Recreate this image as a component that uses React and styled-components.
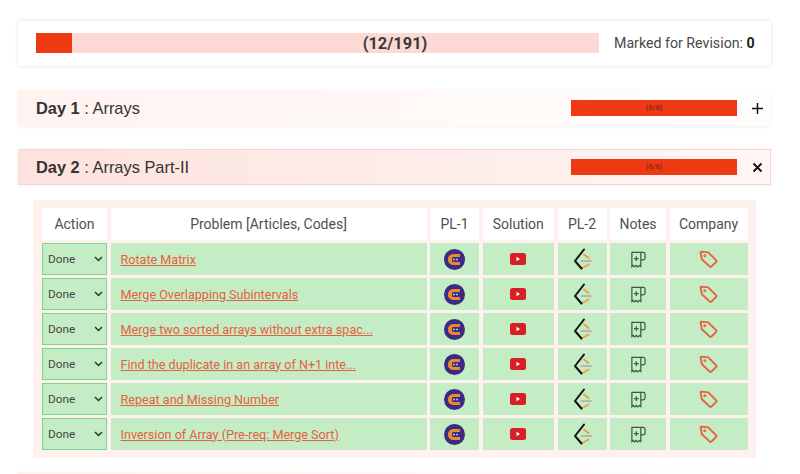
import React from "react";
import styled, { createGlobalStyle } from "styled-components";

const Global = createGlobalStyle`
  html, body { margin: 0; padding: 0; background: #fff; height: 474px; overflow: hidden; }
  body { font-family: "Roboto", "Liberation Sans", sans-serif; color: #333; }
`;
const Page = styled.div`
  width: 800px;
  padding: 21px 29px 0 18px;
  box-sizing: border-box;
`;
const TopCard = styled.div`
  height: 45px;
  box-sizing: border-box;
  display: flex;
  align-items: center;
  padding: 0 17px 1px 18px;
  background: #fff;
  box-shadow: 0 0 4px rgba(0, 0, 0, 0.12);
`;
const TopBar = styled.div`
  position: relative;
  flex: 0 0 563px;
  box-sizing: border-box;
  height: 20px;
  padding-left: 155px;
  background: #fdd9d3;
  display: flex;
  align-items: center;
  justify-content: center;
  font-size: 16.4px;
  font-weight: 700;
  color: #3a3a3a;
`;
const TopFill = styled.div`
  position: absolute;
  left: 0;
  top: 0;
  bottom: 0;
  background: #ee3912;
`;
const TopLabel = styled.span`
  position: relative;
`;
const Revision = styled.div`
  margin-left: 15px;
  font-size: 14.2px;
  color: #4a4a4a;
  white-space: nowrap;
  b { color: #222; }
`;
const Accordion = styled.div`
  height: 36px;
  margin-top: ${p => p.$gap}px;
  display: flex;
  align-items: center;
  padding: 0 0 0 18px;
  box-sizing: border-box;
  background: ${p => (p.$open
    ? "linear-gradient(90deg, #fde2de, #fff6f4)"
    : "linear-gradient(90deg, #fff3f0, #fffdfc)")};
  border: ${p => (p.$open ? "1px solid #f8d3cd" : "none")};
  border-left: none;
  box-shadow: 0 1px 4px rgba(0, 0, 0, 0.06);
  font-family: "Liberation Sans", Arial, sans-serif;
  font-size: 16.4px;
  color: #333;
`;
const Title = styled.div`
  flex: 1;
  b { font-weight: 700; }
`;
const DayBar = styled.div`
  width: 166px;
  height: 16px;
  background: #ee3912;
  color: #8d2a16;
  font-size: 7.5px;
  font-weight: 700;
  text-align: center;
  line-height: 16px;
  font-family: "Roboto", sans-serif;
`;
const Toggle = styled.div`
  width: ${p => (p.$open ? 33 : 34)}px;
  box-sizing: border-box;
  height: 100%;
  padding-right: 7px;
  display: flex;
  align-items: center;
  justify-content: flex-end;
  svg { display: block; }
`;
const TableWrap = styled.div`
  margin: 15px 15px 0 15px;
  width: 723px;
  box-sizing: border-box;
  height: 258px;
  padding: 8px 8px 0 9px;
  background: #fff1ee;
`;
const Grid = styled.div`
  display: grid;
  grid-template-columns: 65px 316px 49px 71.5px 49px 56px 78px;
  grid-auto-rows: 32px;
  column-gap: 3.5px;
  row-gap: 3px;
`;
const Head = styled.div`
  background: #fff;
  display: flex;
  align-items: center;
  justify-content: center;
  font-size: 14px;
  color: #505050;
  white-space: nowrap;
`;
const Cell = styled.div`
  background: #c5edc5;
  display: flex;
  align-items: center;
  justify-content: ${p => (p.$left ? "flex-start" : "center")};
  padding-left: ${p => (p.$left ? "10px" : "0")};
  font-size: 12.6px;
  min-width: 0;
`;
const ActionCell = styled.div`
  background: #c5edc5;
  border: 1px solid #7ad88e;
  box-sizing: border-box;
  display: flex;
  align-items: center;
  justify-content: space-between;
  padding: 0 3px 0 5px;
  font-size: 11.8px;
  color: #444;
`;
const ProblemLink = styled.a`
  color: #e5603f;
  text-decoration: underline;
  white-space: nowrap;
`;

const Chevron = () => (
  <svg width="9" height="6" viewBox="0 0 9 6"><path d="M1 1l3.5 3.5L8 1" fill="none" stroke="#333" strokeWidth="1.5" /></svg>
);
const Ninja = () => (
  <svg width="21" height="21" viewBox="0 0 21 21">
    <circle cx="10.5" cy="10.5" r="10.5" fill="#3b2a86" />
    <path d="M16 5H9a5 5 0 0 0-5 5.500A5 5 0 0 0 9 16h7v-3H8.500V8H16z" fill="#e98a2c" />
    <rect x="8" y="8.500" width="7.500" height="4" rx="1.500" fill="#3b2a86" />
    <circle cx="10" cy="10.500" r="0.900" fill="#c9c6f0" />
    <circle cx="13" cy="10.500" r="0.900" fill="#c9c6f0" />
  </svg>
);
const YouTube = () => (
  <svg width="16" height="12" viewBox="0 0 16 12">
    <rect width="16" height="12" rx="2.500" fill="#d81f26" />
    <path d="M6.500 3.800v4.400L10 6z" fill="#fff" />
  </svg>
);
const LeetCode = () => (
  <svg width="19" height="23" viewBox="0 0 19 23" fill="none" strokeLinecap="round" strokeLinejoin="round">
    <path d="M11 6.500L15.500 10M8.500 20.500L15.500 16.500" stroke="#e8a33d" strokeWidth="2" />
    <path d="M11 1.500L2 13l6.500 7.500" stroke="#111" strokeWidth="2" />
    <path d="M8.500 13H18" stroke="#b5b5b5" strokeWidth="1.800" />
  </svg>
);
const Note = () => (
  <svg width="16" height="17" viewBox="0 0 17 18" fill="none" stroke="#3d5a45" strokeWidth="1.300">
    <path d="M2 1.500h9.500v15l-1.500-1.200-1.700 1.500-1.700-1.500-1.700 1.500-1.500-1.500L2 16.500z" />
    <path d="M11.500 1.500h2.500a2 2 0 0 1 2 2v4a2 2 0 0 1-2 2h-2.500" />
    <path d="M6.700 5.500v5M4.200 8h5" />
  </svg>
);
const Tag = () => (
  <svg width="19" height="19" viewBox="0 0 18 18" fill="none" stroke="#e5603f" strokeWidth="1.800" strokeLinejoin="round">
    <path d="M1.500 2.500a1 1 0 0 1 1-1l6.200.7 7.600 7.600a1 1 0 0 1 0 1.400l-4.600 4.600a1 1 0 0 1-1.400 0L2.700 8.700z" />
    <circle cx="5.500" cy="5.500" r="0.500" />
  </svg>
);

const headers = ["Action", "Problem [Articles, Codes]", "PL-1", "Solution", "PL-2", "Notes", "Company"];
const problems = [
  "Rotate Matrix",
  "Merge Overlapping Subintervals",
  "Merge two sorted arrays without extra spac...",
  "Find the duplicate in an array of N+1 inte...",
  "Repeat and Missing Number",
  "Inversion of Array (Pre-req: Merge Sort)",
];

export default function App() {
  return (
    <Page>
      <Global />
      <TopCard>
        <TopBar>
          <TopFill style={{ width: "6.4%" }} />
          <TopLabel>(12/191)</TopLabel>
        </TopBar>
        <Revision>Marked for Revision: <b>0</b></Revision>
      </TopCard>
      <Accordion $gap={24}>
        <Title><b>Day 1</b> : Arrays</Title>
        <DayBar>(6/6)</DayBar>
        <Toggle>
          <svg width="13" height="13" viewBox="0 0 13 13"><path d="M6.500 1v11M1 6.500h11" stroke="#111" strokeWidth="1.500" /></svg>
        </Toggle>
      </Accordion>
      <Accordion $open $gap={23}>
        <Title><b>Day 2</b> : Arrays Part-II</Title>
        <DayBar>(6/6)</DayBar>
        <Toggle $open>
          <svg width="11" height="11" viewBox="0 0 11 11"><path d="M1.500 1.500l8 8M9.500 1.500l-8 8" stroke="#111" strokeWidth="1.800" /></svg>
        </Toggle>
      </Accordion>
      <TableWrap>
        <Grid>
          {headers.map(h => <Head key={h}>{h}</Head>)}
          {problems.map(p => (
            <React.Fragment key={p}>
              <ActionCell>Done <Chevron /></ActionCell>
              <Cell $left><ProblemLink>{p}</ProblemLink></Cell>
              <Cell><Ninja /></Cell>
              <Cell><YouTube /></Cell>
              <Cell><LeetCode /></Cell>
              <Cell><Note /></Cell>
              <Cell><Tag /></Cell>
            </React.Fragment>
          ))}
        </Grid>
      </TableWrap>
      <Accordion $gap={14} />
    </Page>
  );
}
